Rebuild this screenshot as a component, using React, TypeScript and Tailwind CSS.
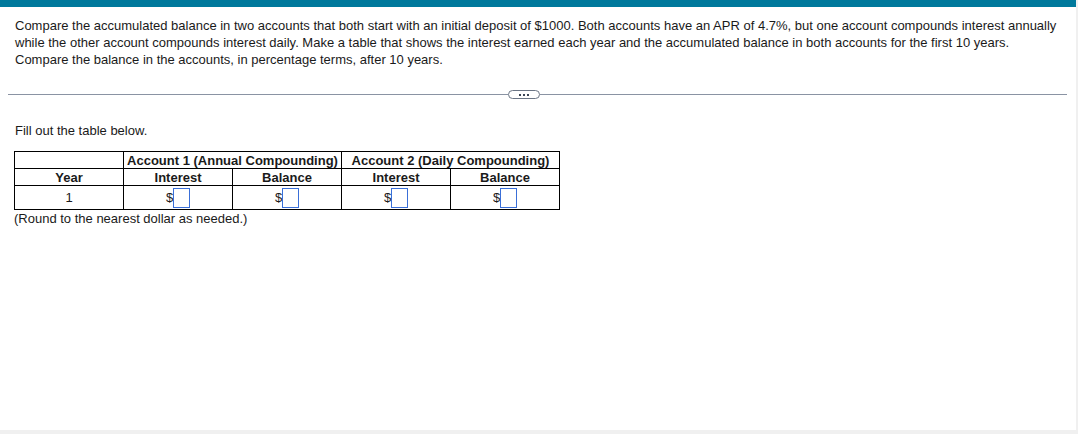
import React from 'react';

const InputBox: React.FC = () => (
  <span className="inline-flex items-center">
    <span>$</span>
    <span className="inline-block w-[17px] h-[20px] border border-[#3a6fd8] bg-white align-middle" />
  </span>
);

const App: React.FC = () => {
  return (
    <div className="w-[1078px] h-[434px] bg-[#f0f0f0] font-['Liberation_Sans',Arial,sans-serif] text-[#1a1a1a]">
      <div className="w-[1076px] h-[430px] bg-white">
        <div className="h-[7px] bg-[#00799c]" />
        <div className="px-[15px] pt-[10px] text-[13px] leading-[17px]">
          <p>
            Compare the accumulated balance in two accounts that both start with an initial deposit of $1000. Both accounts have an APR of 4.7%, but one account compounds interest annually while the other account compounds interest daily. Make a table that shows the interest earned each year and the accumulated balance in both accounts for the first 10 years. Compare the balance in the accounts, in percentage terms, after 10 years.
          </p>
        </div>

        <div className="flex items-center pl-[8px] w-[1067px] mt-[22px] h-[9px]">
          <div className="w-[500px] h-px bg-[#8a93a3]" />
          <div className="w-[32px] h-[9px] rounded-full border border-[#6b7585] bg-white flex items-center justify-center gap-[2px]">
            <span className="w-[2px] h-[2px] bg-[#3c4656]" />
            <span className="w-[2px] h-[2px] bg-[#3c4656]" />
            <span className="w-[2px] h-[2px] bg-[#3c4656]" />
          </div>
          <div className="flex-1 h-px bg-[#8a93a3]" />
        </div>

        <div className="px-[15px] mt-[23px] text-[13px] leading-[17px]">
          <p>Fill out the table below.</p>
        </div>

        <div className="pl-[14px] mt-[12px] text-[13px]">
          <table className="border-collapse border border-black text-center leading-[15px]">
            <colgroup>
              <col className="w-[109px]" />
              <col className="w-[109px]" />
              <col className="w-[109px]" />
              <col className="w-[109px]" />
              <col className="w-[109px]" />
            </colgroup>
            <tbody>
              <tr className="h-[17px]">
                <td className="border border-black p-0" />
                <td colSpan={2} className="border border-black p-0 font-bold">Account 1 (Annual Compounding)</td>
                <td colSpan={2} className="border border-black p-0 font-bold">Account 2 (Daily Compounding)</td>
              </tr>
              <tr className="h-[17px]">
                <td className="border border-black p-0 font-bold">Year</td>
                <td className="border border-black p-0 font-bold">Interest</td>
                <td className="border border-black p-0 font-bold">Balance</td>
                <td className="border border-black p-0 font-bold">Interest</td>
                <td className="border border-black p-0 font-bold">Balance</td>
              </tr>
              <tr className="h-[24px]">
                <td className="border border-black p-0">1</td>
                <td className="border border-black p-0"><InputBox /></td>
                <td className="border border-black p-0"><InputBox /></td>
                <td className="border border-black p-0"><InputBox /></td>
                <td className="border border-black p-0"><InputBox /></td>
              </tr>
            </tbody>
          </table>
          <p className="leading-[17px]">(Round to the nearest dollar as needed.)</p>
        </div>
      </div>
    </div>
  );
};

export default App;
